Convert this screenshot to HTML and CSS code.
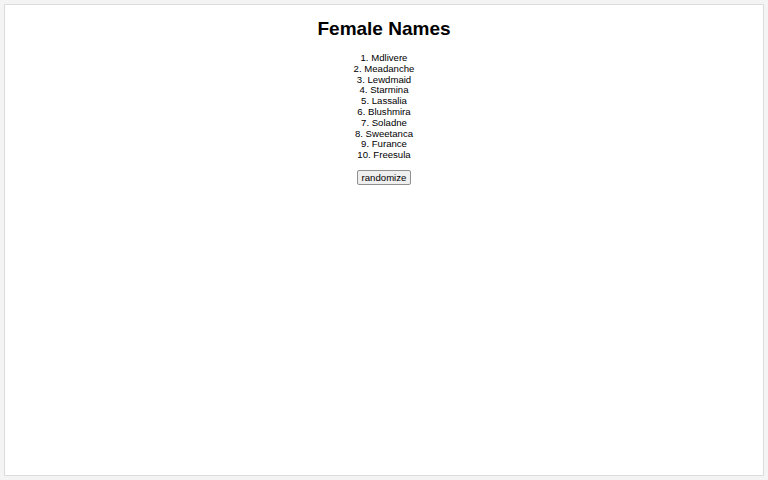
FILE: index.html
```html
<!DOCTYPE html>
<html lang="en">

<head>
    <meta charset="UTF-8">
    <meta name="viewport" content="width=device-width, initial-scale=1.0">
    <title>Female Names</title>

    <link rel="stylesheet" href="styles.css">
</head>

<body>
    <div class="page">
        <h1 class="titulo">Female Names</h1>
        <ol class="nomes" id="nomes">
            <li>Mdlivere</li>
            <li>Meadanche</li>
            <li>Lewdmaid</li>
            <li>Starmina</li>
            <li>Lassalia</li>
            <li>Blushmira</li>
            <li>Soladne</li>
            <li>Sweetanca</li>
            <li>Furance</li>
            <li>Freesula</li>
        </ol>
        <button type="button" class="btn" id="randomize">randomize</button>
    </div>

    <script>
        var lista = document.getElementById("nomes");
        var botao = document.getElementById("randomize");

        botao.addEventListener("click", function () {
            var itens = Array.prototype.slice.call(lista.children);
            for (var i = itens.length - 1; i > 0; i--) {
                var j = Math.floor(Math.random() * (i + 1));
                var tmp = itens[i].textContent;
                itens[i].textContent = itens[j].textContent;
                itens[j].textContent = tmp;
            }
        });
    </script>
</body>

</html>
```

FILE: styles.css
```css
html {
    background-color: #f4f4f4;
}

body {
    margin: 4px;
    height: 472px;
    box-sizing: border-box;
    border: 1px solid #dcdcdc;
    background-color: #fff;
    font-family: "Liberation Sans", Arial, sans-serif;
}

.page {
    display: flex;
    flex-direction: column;
    align-items: center;
    padding-top: 13px;
}

.titulo {
    font-size: 19px;
    font-weight: bold;
    margin: 0 0 13px 0;
    line-height: 22px;
}

.nomes {
    list-style-position: inside;
    padding: 0;
    margin: 0 0 9px 0;
    font-size: 9.6px;
    line-height: 10.8px;
    text-align: center;
}

.btn {
    font-family: "Liberation Sans", Arial, sans-serif;
    font-size: 9.6px;
    padding: 1px 4px;
    border: 1px solid #8f8f8f;
    border-radius: 2px;
    background-color: #efefef;
    color: #000;
}
```
